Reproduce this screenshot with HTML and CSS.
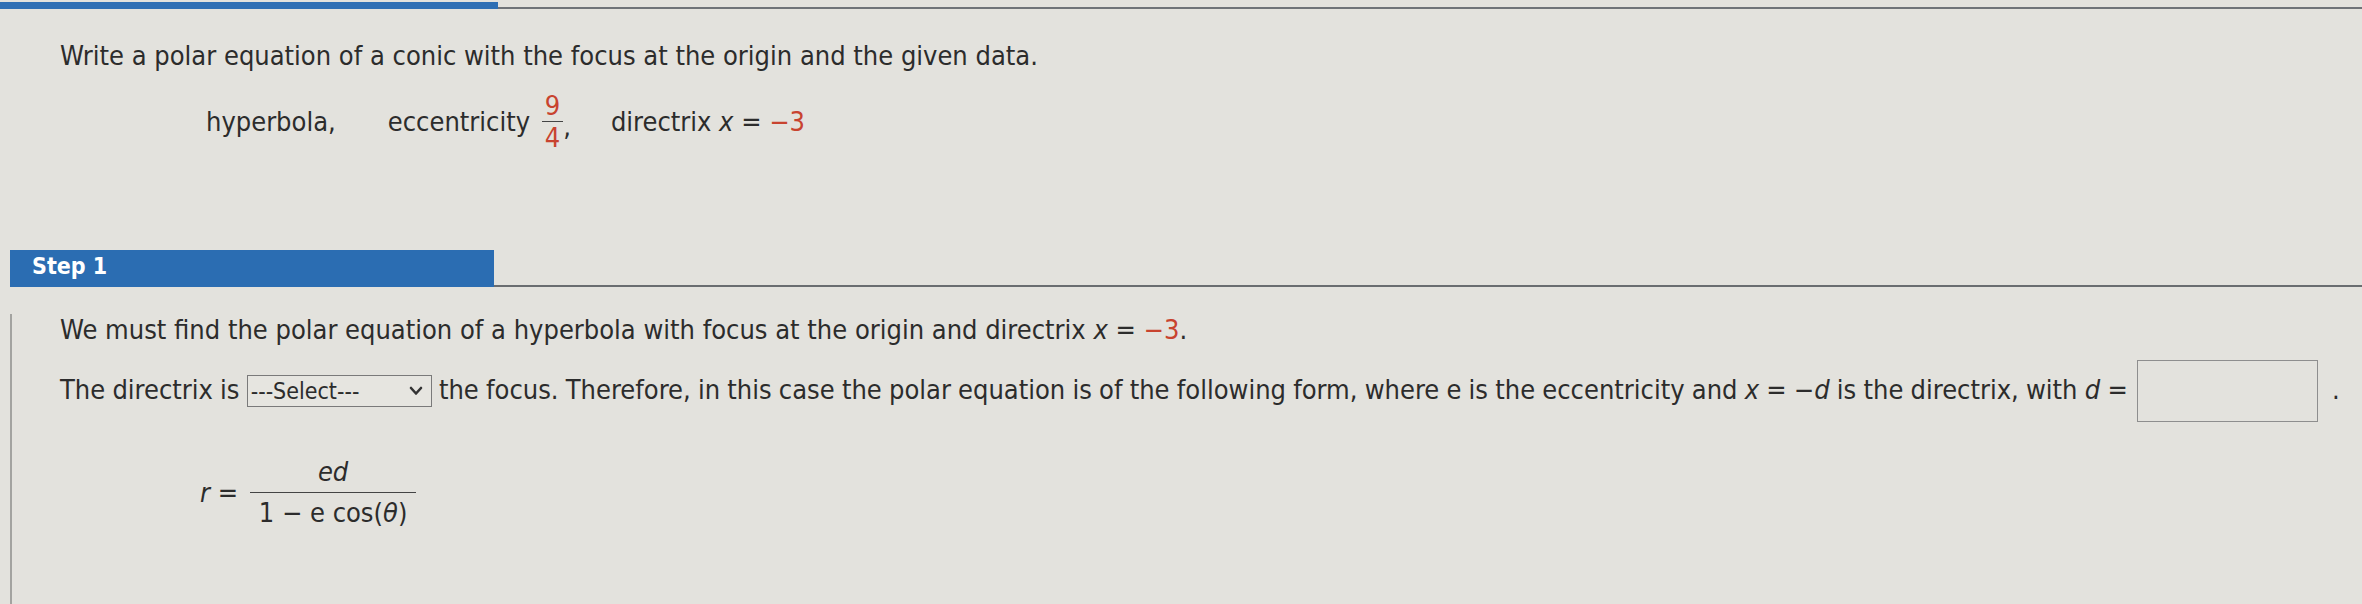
FILE: index.html
```html
<!DOCTYPE html>
<html>
<head>
<meta charset="utf-8">
<title>Polar equation of a conic</title>
<link rel="stylesheet" href="styles.css">
</head>
<body>
<div class="topbar"><div class="topbar-blue"></div><div class="topbar-line"></div></div>
<div class="question">
  <p class="prompt">Write a polar equation of a conic with the focus at the origin and the given data.</p>
  <div class="data">
    <span class="item item-type">hyperbola,</span>
    <span class="item item-ecc">eccentricity <span class="frac red"><span class="num">9</span><span class="den">4</span></span><span class="comma">,</span></span>
    <span class="item">directrix <i class="mv">x</i> = <span class="red">−3</span></span>
  </div>
</div>
<div class="step">
  <div class="step-head"><div class="step-title">Step 1</div><div class="step-rule"></div></div>
  <div class="step-body">
    <p class="line1">We must find the polar equation of a hyperbola with focus at the origin and directrix <i class="mv">x</i> = <span class="red">−3</span>.</p>
    <p class="line2">The directrix is <span class="select"><span class="select-text">---Select---</span><svg class="chev" width="14" height="10" viewBox="0 0 14 10"><path d="M2 2 L7 7.5 L12 2" fill="none" stroke="#333" stroke-width="2.6" stroke-linecap="round" stroke-linejoin="round"/></svg></span> the focus. Therefore, in this case the polar equation is of the following form, where e is the eccentricity and <i class="mv">x</i> = −<i class="mv">d</i> is the directrix, with <i class="mv">d</i> = <span class="answer"></span><span class="dot">.</span></p>
    <div class="formula">
      <span class="lhs"><i class="mv">r</i> =</span>
      <span class="bigfrac"><span class="bnum"><i class="mv">ed</i></span><span class="bden">1 − e cos(<i class="mv">θ</i>)</span></span>
    </div>
  </div>
</div>
</body>
</html>
```

FILE: styles.css
```css
html, body {
  margin: 0;
  padding: 0;
}
body {
  background: #e3e2dd;
  color: #2c2c2c;
  font-family: "DejaVu Sans", "Liberation Sans", sans-serif;
  font-stretch: condensed;
  font-size: 27px;
  width: 2362px;
  height: 604px;
  overflow: hidden;
}
.topbar {
  display: flex;
  align-items: flex-end;
  height: 9px;
}
.topbar-blue {
  width: 498px;
  height: 7px;
  background: #2f6fb4;
}
.topbar-line {
  flex: 1;
  height: 2px;
  background: #6f7378;
}
.question {
  padding-left: 60px;
}
.prompt {
  margin: 31px 0 0;
  line-height: 32px;
}
.data {
  display: flex;
  align-items: center;
  margin-top: 20px;
  padding-left: 146px;
  line-height: 32px;
}
.item {
  display: inline-flex;
  align-items: center;
  white-space: pre;
}
.item-type { margin-right: 52px; }
.item-ecc { margin-right: 40px; }
.red { color: #c8432f; }
.mv { font-style: italic; }
.frac {
  display: inline-flex;
  flex-direction: column;
  align-items: center;
  margin-left: 4px;
  line-height: 27px;
}
.frac .num {
  padding: 0 3px 2px;
  border-bottom: 1.5px solid #444;
}
.frac .den {
  padding-top: 2px;
}
.comma {
  align-self: center;
  padding-top: 10px;
}
.step {
  margin: 99px 0 0 10px;
}
.step-head {
  display: flex;
  align-items: flex-end;
}
.step-title {
  width: 484px;
  height: 37px;
  padding: 3px 0 0 22px;
  box-sizing: border-box;
  background: #2b6db2;
  color: #fff;
  font-weight: bold;
  font-size: 23px;
  line-height: 26px;
}
.step-rule {
  flex: 1;
  height: 2px;
  background: #6a6d70;
}
.step-body {
  border-left: 2px solid #a3a3a0;
  padding-left: 48px;
  height: 300px;
}
.line1 {
  margin: 27px 0 0;
  line-height: 32px;
}
.line2 {
  margin: 14px 0 0;
  line-height: 32px;
  white-space: nowrap;
  word-spacing: -0.5px;
}
.select {
  display: inline-flex;
  align-items: center;
  justify-content: space-between;
  width: 185px;
  height: 32px;
  box-sizing: border-box;
  border: 1.5px solid #7a7a7a;
  padding: 0 8px 0 3px;
  vertical-align: middle;
  font-size: 23px;
  word-spacing: 0;
  background: #e6e5e0;
}
.answer {
  display: inline-block;
  width: 181px;
  height: 62px;
  box-sizing: border-box;
  border: 1.5px solid #8e8e8e;
  vertical-align: middle;
  margin-left: 2px;
}
.dot {
  margin-left: 14px;
}
.formula {
  display: flex;
  align-items: center;
  margin: 34px 0 0 140px;
}
.lhs {
  margin-right: 12px;
  white-space: pre;
}
.bigfrac {
  display: inline-flex;
  flex-direction: column;
  align-items: center;
  line-height: 32px;
}
.bnum {
  width: 166px;
  text-align: center;
  border-bottom: 1.5px solid #444;
  padding-bottom: 4px;
}
.bden {
  padding-top: 4px;
}
```
